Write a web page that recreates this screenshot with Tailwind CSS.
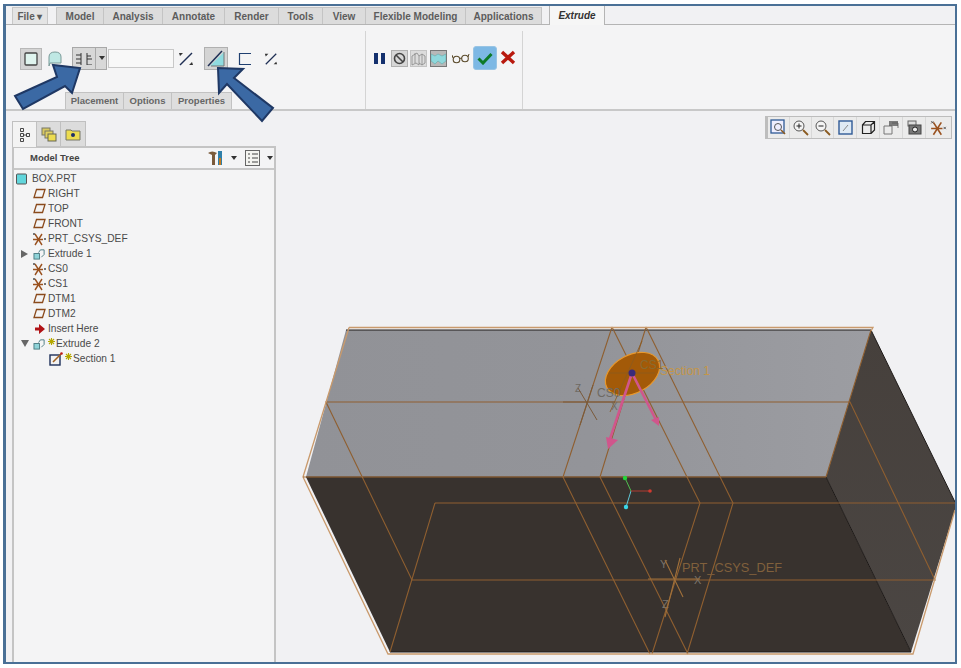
<!DOCTYPE html>
<html>
<head>
<meta charset="UTF-8">
<script src="https://cdn.jsdelivr.net/npm/@tailwindcss/browser@4"></script>
</head>
<body class="relative w-[961px] h-[668px] overflow-hidden bg-white font-['Liberation_Sans',Arial,sans-serif]">

<!-- shared icons -->
<svg class="hidden">
  <symbol id="datum" viewBox="0 0 13 11"><path d="M3.500 1.500H12L9.500 9.500H1z" fill="none" stroke="#8a4a1c" stroke-width="1.300"/></symbol>
  <symbol id="csys" viewBox="0 0 15 14"><g stroke="#9a5220" stroke-width="1.400" fill="none"><path d="M3 2l7 11M10 2L3 13M1 7.500h10"/></g><path d="M1 1l2 2M3 1L1 3M12 6l2 2M14 6l-2 2" stroke="#555" stroke-width=".8"/></symbol>
  <symbol id="extrude" viewBox="0 0 14 13"><rect x="1" y="6" width="6" height="6" fill="#8fd3d8" stroke="#4a7a80"/><path d="M6 5l2-3h4v5l-3 3" fill="none" stroke="#4a7a80"/></symbol>
  <symbol id="star" viewBox="0 0 7 7"><path d="M3.500 0v7M0 3.500h7M1 1l5 5M6 1L1 6" stroke="#b5a800" stroke-width="1.100"/></symbol>
</svg>

<div class="ml-[3px] mt-1 w-[954px] h-[660px] border-l-[3px] border-t-2 border-r-2 border-b-2 border-[#4a7096] bg-[#f1f1f3] flex flex-col">

  <!-- menu tabs -->
  <div class="h-[19px] pl-[6px] flex items-end border-b border-[#b4b4b4] text-[10px] font-bold text-[#5c5c5c]">
    <div class="w-[36px] h-[17px] flex items-center justify-center bg-[#e4e4e4] border-x border-t border-[#c8c8c8]">File ▾</div>
    <div class="ml-2 flex h-[17px] bg-[#dcdcdc] border-l border-t border-r border-[#c4c4c4]">
      <div class="w-[47px] flex items-center justify-center border-r border-[#c4c4c4]">Model</div>
      <div class="w-[59px] flex items-center justify-center border-r border-[#c4c4c4]">Analysis</div>
      <div class="w-[62px] flex items-center justify-center border-r border-[#c4c4c4]">Annotate</div>
      <div class="w-[54px] flex items-center justify-center border-r border-[#c4c4c4]">Render</div>
      <div class="w-[44px] flex items-center justify-center border-r border-[#c4c4c4]">Tools</div>
      <div class="w-[43px] flex items-center justify-center border-r border-[#c4c4c4]">View</div>
      <div class="w-[100px] flex items-center justify-center border-r border-[#c4c4c4]">Flexible Modeling</div>
      <div class="w-[75px] flex items-center justify-center">Applications</div>
    </div>
    <div class="ml-[7px] w-[56px] h-[19px] -mb-px flex items-center justify-center bg-[#f6f6f6] border-x border-[#b4b4b4] italic text-[#333]">Extrude</div>
  </div>

  <!-- ribbon -->
  <div class="h-[86px] flex border-b-2 border-[#c8c8c8] bg-[#f4f4f5]">
    <div class="w-[359px] pl-[14px] flex flex-col">
      <div class="mt-[22px] h-[23px] flex items-center">
        <div class="w-[22px] h-[22px] bg-[#d4d4d4] border border-[#b8b8b8] flex items-center justify-center">
          <svg width="14" height="14" viewBox="0 0 14 14"><rect x="1" y="1" width="12" height="12" rx="1" fill="#dff4ee" stroke="#444" stroke-width="1.300"/></svg>
        </div>
        <svg class="ml-[5px]" width="16" height="16" viewBox="0 0 16 16"><path d="M2 15V6q0-5 6-5t6 5v6H3z" fill="#bfe8e4" stroke="#7a9a98"/></svg>
        <div class="ml-[9px] w-[35px] h-[23px] bg-[#d8d8d8] border border-[#a8a8a8] flex">
          <div class="w-[23px] flex items-center justify-center border-r border-[#aaa]">
            <svg width="18" height="12" viewBox="0 0 18 12"><path d="M6 0v12M1 2h5M1 6h5M1 10h5M12 0v12h5M12 6h5M12 3h4" fill="none" stroke="#333"/></svg>
          </div>
          <svg class="ml-[3px] mt-2" width="6" height="4" viewBox="0 0 6 4"><path d="M0 0h6L3 4z" fill="#333"/></svg>
        </div>
        <div class="ml-px w-[66px] h-[19px] bg-[#f8f8f8] border border-[#c8c8c8]"></div>
        <svg class="ml-1" width="16" height="16" viewBox="0 0 16 16"><path d="M2 14L14 2" stroke="#1f2f55" stroke-width="1.400"/><path d="M1 2h4l-3 3zM15 14h-4l3-3z" fill="#333"/></svg>
        <div class="ml-[10px] w-[24px] h-[23px] bg-[#d4d4d4] border border-[#b0b0b0] flex items-center justify-center">
          <svg width="18" height="17" viewBox="0 0 18 17"><path d="M17 2v14H3z" fill="#8fdbe0"/><path d="M1 16L15 1" stroke="#1f2f55" stroke-width="1.500"/><path d="M17 2v14H4" fill="none" stroke="#777"/></svg>
        </div>
        <svg class="ml-[10px]" width="14" height="14" viewBox="0 0 14 14"><path d="M13 1.500H1.500v11H13" fill="none" stroke="#1f3f70" stroke-width="1.200"/></svg>
        <svg class="ml-[12px]" width="14" height="16" viewBox="0 0 16 16"><path d="M2 14L14 2" stroke="#1f2f55" stroke-width="1.400"/><path d="M1 2h4l-3 3zM15 14h-4l3-3z" fill="#333"/></svg>
      </div>
      <div class="mt-auto ml-[45px] h-[17px] flex text-[9.5px] font-bold text-[#666]">
        <div class="w-[59px] flex items-center justify-center bg-[#dedede] border border-b-0 border-[#c2c2c2]">Placement</div>
        <div class="w-[48px] flex items-center justify-center bg-[#dedede] border-r border-t border-[#c2c2c2]">Options</div>
        <div class="w-[60px] flex items-center justify-center bg-[#dedede] border-r border-t border-[#c2c2c2]">Properties</div>
      </div>
    </div>
    <div class="w-[158px] mt-[6px] border-x border-[#d4d4d4] pl-[8px] pt-[16px] flex items-start">
      <div class="mt-[6px] w-[11px] h-[11px] flex justify-between"><div class="w-1 bg-[#14306e]"></div><div class="w-1 bg-[#14306e]"></div></div>
      <div class="ml-[6px] mt-[3px] w-[17px] h-[17px] bg-[#d6d6d6] border border-[#b0b0b0] flex items-center justify-center">
        <svg width="13" height="13" viewBox="0 0 13 13"><circle cx="6.500" cy="6.500" r="5" fill="none" stroke="#444" stroke-width="1.600"/><path d="M3 3l7 7" stroke="#444" stroke-width="1.600"/></svg>
      </div>
      <div class="ml-[2px] mt-[3px] w-[17px] h-[17px] bg-[#dcdcdc] border border-[#c4c4c4] flex items-center justify-center">
        <svg width="15" height="14" viewBox="0 0 15 14"><path d="M1 4l5-3 2 3v9l-3-2-4 2zM8 4l3-2 3 2v7l-3 2-3-2M4 1v10M11 2v11" fill="none" stroke="#888" stroke-width=".8"/></svg>
      </div>
      <div class="ml-[3px] mt-[3px] w-[17px] h-[17px] bg-[#b8b8b8] border border-[#777] flex items-center justify-center">
        <svg width="15" height="13" viewBox="0 0 15 13"><path d="M0 2l4 2 3-2 4 2 4-2v7l-4 3-4-3-3 3-4-3z" fill="#8fd8dc" stroke="#6aa" stroke-width=".6"/></svg>
      </div>
      <svg class="ml-[5px] mt-[6px]" width="18" height="11" viewBox="0 0 18 11"><circle cx="4.500" cy="6.500" r="3.300" fill="none" stroke="#5a4a2a" stroke-width="1.100"/><circle cx="13" cy="5.500" r="3.300" fill="none" stroke="#5a4a2a" stroke-width="1.100"/><path d="M7.500 5.500l2.500-.5M1 5L0 2M16 4l1-3" stroke="#5a4a2a"/></svg>
      <div class="ml-[3px] -mt-[1px] w-[24px] h-[24px] rounded-[3px] bg-[#7db8e4] border border-[#98c4e4] flex items-center justify-center">
        <svg width="16" height="13" viewBox="0 0 16 13"><path d="M1.500 6.500l4.500 4.500 8.500-9" fill="none" stroke="#0d7a26" stroke-width="3"/></svg>
      </div>
      <svg class="ml-[3px] mt-[3px]" width="16" height="15" viewBox="0 0 16 15"><path d="M2 2l12 11M14 2L2 13" stroke="#b8190e" stroke-width="3.400"/></svg>
    </div>
  </div>

  <!-- main area -->
  <div class="flex-1 flex min-h-0">
    <!-- model tree -->
    <div class="w-[270px] pl-[6px] pt-[10px] flex flex-col">
      <div class="h-[25px] flex">
        <div class="w-[25px] h-[26px] bg-[#f3f3f3] border-x border-t border-[#c0c0c0] z-10 flex items-center justify-center">
          <svg width="12" height="16" viewBox="0 0 12 16"><path d="M1.500 1.500h3v3h-3zM1.500 6.500h3v3h-3zM1.500 11.500h3v3h-3zM7.500 6.500h3v3h-3zM4.500 8h3" fill="none" stroke="#333" stroke-width=".9"/></svg>
        </div>
        <div class="w-[24px] bg-[#dcdcdc] border-r border-t border-[#c0c0c0] flex items-center justify-center">
          <svg width="16" height="16" viewBox="0 0 16 16"><rect x="1" y="2" width="8" height="7" fill="#d8c860" stroke="#776"/><rect x="4" y="5" width="8" height="7" fill="#e0d060" stroke="#776"/><rect x="7" y="8" width="8" height="7" fill="#ecdc50" stroke="#665"/></svg>
        </div>
        <div class="w-[25px] bg-[#dcdcdc] border-r border-t border-[#c0c0c0] flex items-center justify-center">
          <svg width="16" height="14" viewBox="0 0 16 14"><path d="M1 3h5l1 1h8v9H1z" fill="#ecdc50" stroke="#776"/><circle cx="8" cy="8" r="2" fill="#1d2f6a"/></svg>
        </div>
      </div>
      <div class="flex-1 border-x-2 border-t-2 border-[#c4c4c4] bg-[#f4f4f5] text-[10.2px] text-[#4a4a4a]">
        <div class="h-[22px] pl-[16px] flex items-center border-b-2 border-[#c8c8c8]">
          <span class="text-[9.5px] font-bold text-[#444]">Model Tree</span>
          <svg class="ml-[127px]" width="17" height="16" viewBox="0 0 17 16"><path d="M1 3q4-3 9 0l-2 2v10H5V5z" fill="#7a5a3a"/><path d="M11 1h4v14h-4z" fill="#2f7fa8"/><path d="M12 8h2v7h-2z" fill="#c87a1c"/></svg>
          <svg class="ml-[7px]" width="6" height="4" viewBox="0 0 6 4"><path d="M0 0h6L3 4z" fill="#333"/></svg>
          <svg class="ml-[8px]" width="15" height="16" viewBox="0 0 15 16"><rect x=".5" y=".5" width="14" height="15" fill="#f4f4f0" stroke="#666"/><path d="M3 4h2M7 4h6M3 8h2M7 8h6M3 12h2M7 12h6" stroke="#444"/></svg>
          <svg class="ml-[7px]" width="6" height="4" viewBox="0 0 6 4"><path d="M0 0h6L3 4z" fill="#333"/></svg>
        </div>
        <div class="pt-px">
          <div class="h-[15px] pl-[2px] flex items-center gap-[4px]"><svg width="12" height="12" viewBox="0 0 12 12"><rect x=".5" y="1" width="10" height="10" rx="1" fill="#62d6dc" stroke="#555"/></svg>BOX.PRT</div>
          <div class="h-[15px] pl-[19px] flex items-center gap-[2px]"><svg width="13" height="11"><use href="#datum"/></svg>RIGHT</div>
          <div class="h-[15px] pl-[19px] flex items-center gap-[2px]"><svg width="13" height="11"><use href="#datum"/></svg>TOP</div>
          <div class="h-[15px] pl-[19px] flex items-center gap-[2px]"><svg width="13" height="11"><use href="#datum"/></svg>FRONT</div>
          <div class="h-[15px] pl-[18px] flex items-center gap-[1px]"><svg width="15" height="14"><use href="#csys"/></svg>PRT_CSYS_DEF</div>
          <div class="h-[15px] pl-[7px] flex items-center"><svg width="7" height="8" viewBox="0 0 7 8"><path d="M0 0l7 4-7 4z" fill="#666"/></svg><svg class="ml-[5px] mr-[2px]" width="13" height="12"><use href="#extrude"/></svg>Extrude 1</div>
          <div class="h-[15px] pl-[18px] flex items-center gap-[1px]"><svg width="15" height="14"><use href="#csys"/></svg>CS0</div>
          <div class="h-[15px] pl-[18px] flex items-center gap-[1px]"><svg width="15" height="14"><use href="#csys"/></svg>CS1</div>
          <div class="h-[15px] pl-[19px] flex items-center gap-[2px]"><svg width="13" height="11"><use href="#datum"/></svg>DTM1</div>
          <div class="h-[15px] pl-[19px] flex items-center gap-[2px]"><svg width="13" height="11"><use href="#datum"/></svg>DTM2</div>
          <div class="h-[15px] pl-[21px] flex items-center gap-[3px]"><svg width="10" height="10" viewBox="0 0 10 10"><path d="M0 3.500h4V0l6 5-6 5V6.500H0z" fill="#b01216"/></svg>Insert Here</div>
          <div class="h-[15px] pl-[7px] flex items-center"><svg width="8" height="7" viewBox="0 0 8 7"><path d="M0 0h8L4 7z" fill="#666"/></svg><svg class="ml-[4px] mr-[2px]" width="13" height="12"><use href="#extrude"/></svg><svg class="mr-[1px] -mt-[4px]" width="7" height="7"><use href="#star"/></svg>Extrude 2</div>
          <div class="h-[15px] pl-[35px] flex items-center"><svg width="14" height="14" viewBox="0 0 14 14"><rect x="1" y="3" width="10" height="10" fill="#f2f2f2" stroke="#1d2f5a" stroke-width="1.400"/><path d="M4 10l8-8" stroke="#a06020" stroke-width="1.600"/><circle cx="12.500" cy="1.500" r="1.300" fill="#c01818"/></svg><svg class="ml-[2px] mr-[1px] -mt-[4px]" width="7" height="7"><use href="#star"/></svg>Section 1</div>
        </div>
      </div>
    </div>

    <!-- graphics window -->
    <div class="relative flex-1">
      <svg class="block" width="679" height="551" viewBox="276 111 679 551">
        <defs>
          <linearGradient id="top" x1="0" y1="0" x2="1" y2="0"><stop offset="0" stop-color="#919297"/><stop offset=".5" stop-color="#939499"/><stop offset="1" stop-color="#9c9da2"/></linearGradient>
          <linearGradient id="side" x1="0" y1="0" x2="0" y2="1"><stop offset="0" stop-color="#46403c"/><stop offset="1" stop-color="#4b4643"/></linearGradient>
        </defs>
        <polygon points="346,330 871,330 826,477 306,477" fill="url(#top)"/>
        <polygon points="306,477 826,477 911,652 390,652" fill="#38322e"/>
        <polygon points="871,330 955,502 955,510 911,652 826,477" fill="url(#side)"/>
        <path d="M346 330H871L955 502M826 477L911 652H390M306 477H826" fill="none" stroke="#1e1a18" stroke-width="1"/>
        <!-- datum planes -->
        <g fill="none" stroke="#8f5f30" stroke-width="1.100">
          <polygon points="326,402 850,402 935,580 412,580"/>
          <path d="M435 503H955M435 503L390 652"/>
          <path d="M612 327L700 503L652 654M612 327L563 477L650 654"/>
          <path d="M646 327L733 503L687 654M646 327L600 477L688 654"/>
          <path d="M826 477L871 330"/>
        </g>
        <!-- outline -->
        <path d="M349 327.500H873L871 331M955 510L913 654H388L303 477L349 327.500" fill="none" stroke="#c99a6c" stroke-width="1.300"/>
        <path d="M303 477H826" stroke="#a8713a" stroke-width="1.200"/>
        <!-- section -->
        <ellipse cx="632.500" cy="374" rx="29" ry="19" transform="rotate(-28 632.500 374)" fill="#a35a08" stroke="#e8982c" stroke-width="1.200"/>
        <path d="M609 373H655M642 341L610 412" stroke="#8a5a20" stroke-width=".8" fill="none"/>
        <text x="660" y="375" font-size="12" fill="#c49648">Section 1</text>
        <text x="640" y="369" font-size="12" fill="#8a6a30">CS1</text>
        <text x="597" y="397" font-size="12" fill="#6e6a64">CS0</text>
        <text x="575" y="392" font-size="10" fill="#6e6a64">Z</text>
        <text x="611" y="410" font-size="10" fill="#6e6a64">X</text>
        <path d="M563 402H615M578 388L597 420M593 385L580 425" stroke="#7a5a3a" stroke-width="1" fill="none"/>
        <!-- direction arrows -->
        <path d="M632 373L609 442M632 373L656 420" stroke="#d0568c" stroke-width="2.600" fill="none"/>
        <polygon points="606,437 618,440 608,449" fill="#d0568c"/>
        <polygon points="651,420 659,417 659,426" fill="#d0568c"/>
        <circle cx="632" cy="373" r="3.500" fill="#3a2a7a"/>
        <!-- triad -->
        <path d="M625 478L631 491" stroke="#4fbf4f" fill="none"/>
        <path d="M631 491L626 507" stroke="#5fc8d8" fill="none"/>
        <path d="M631 491H650" stroke="#b03a30" fill="none"/>
        <circle cx="625" cy="478" r="2.200" fill="#22d63a"/>
        <circle cx="626" cy="507" r="2.200" fill="#3ad8e8"/>
        <circle cx="650" cy="491" r="1.800" fill="#d03a30"/>
        <!-- default csys -->
        <text x="682" y="572" font-size="12.800" fill="#80603c">PRT_CSYS_DEF</text>
        <text x="660" y="568" font-size="11" fill="#7a746c">Y</text>
        <text x="662" y="608" font-size="11" fill="#7a746c">Z</text>
        <text x="694" y="584" font-size="11" fill="#7a746c">X</text>
        <path d="M665 560L683 597M680 558L665 617M648 579H700" stroke="#a0703a" stroke-width="1.100" fill="none"/>
      </svg>

      <!-- view toolbar -->
      <div class="absolute top-[5px] right-[3px] h-[23px] w-[187px] bg-[#ebebeb] border border-[#bdbdbd] border-l-[3px] flex items-center">
        <div class="w-[22px] h-full flex items-center justify-center border-r border-[#d8d8d8]"><svg width="17" height="17" viewBox="0 0 17 17"><rect x="1" y="1" width="13" height="13" fill="#eef" stroke="#2f5a96" stroke-width="1.300"/><circle cx="8" cy="8" r="3.500" fill="none" stroke="#555"/><path d="M11 11l4 4" stroke="#8a5a20" stroke-width="1.600"/></svg></div>
        <div class="w-[22px] h-full flex items-center justify-center border-r border-[#d8d8d8]"><svg width="17" height="17" viewBox="0 0 17 17"><circle cx="7" cy="7" r="5" fill="#f4f4f4" stroke="#555"/><path d="M4.500 7h5M7 4.500v5" stroke="#222"/><path d="M11 11l5 5" stroke="#8a5a20" stroke-width="1.800"/></svg></div>
        <div class="w-[22px] h-full flex items-center justify-center border-r border-[#d8d8d8]"><svg width="17" height="17" viewBox="0 0 17 17"><circle cx="7" cy="7" r="5" fill="#f4f4f4" stroke="#555"/><path d="M4.500 7h5" stroke="#222"/><path d="M11 11l5 5" stroke="#8a5a20" stroke-width="1.800"/></svg></div>
        <div class="w-[23px] h-full flex items-center justify-center border-r border-[#d8d8d8]"><svg width="15" height="15" viewBox="0 0 15 15"><rect x="1" y="1" width="13" height="13" fill="#dfeaf4" stroke="#2f5a96" stroke-width="1.400"/><path d="M5 11l5-6" stroke="#888"/></svg></div>
        <div class="w-[23px] h-full flex items-center justify-center border-r border-[#d8d8d8]"><svg width="15" height="15" viewBox="0 0 15 15"><path d="M1.500 5h8.500v8.500H1.500zM1.500 5l3-3.500h9V10L10 13.500M10 5l3.500-3.500" fill="none" stroke="#222" stroke-width="1.200"/></svg></div>
        <div class="w-[23px] h-full flex items-center justify-center border-r border-[#d8d8d8]"><svg width="16" height="15" viewBox="0 0 16 15"><path d="M1 6h8v8H1zM9 3h6v5" fill="none" stroke="#777"/><path d="M6 1h9v5H6z" fill="#555" opacity=".75"/></svg></div>
        <div class="w-[23px] h-full flex items-center justify-center border-r border-[#d8d8d8]"><svg width="15" height="15" viewBox="0 0 15 15"><rect x="1" y="1" width="8" height="5" fill="#ddd" stroke="#666"/><rect x="2" y="5" width="12" height="9" fill="#777" stroke="#444"/><circle cx="8" cy="9.500" r="2.500" fill="#eee" stroke="#222"/></svg></div>
        <div class="flex-1 h-full flex items-center justify-center"><svg width="17" height="16"><use href="#csys"/></svg></div>
      </div>
    </div>
  </div>
</div>

<!-- annotation arrows drawn on top of the screenshot -->
<svg class="absolute top-0 left-0 pointer-events-none" width="961" height="668" viewBox="0 0 961 668">
  <polygon points="15,96 57,77 53,65 80,68 72,93 65,86 23,109" fill="#3b69a4" stroke="#1f3864" stroke-width="2"/>
  <polygon points="218,68 243,69 234,78 273,108 262,121 227,84 219,93" fill="#3b69a4" stroke="#1f3864" stroke-width="2"/>
</svg>
</body>
</html>
